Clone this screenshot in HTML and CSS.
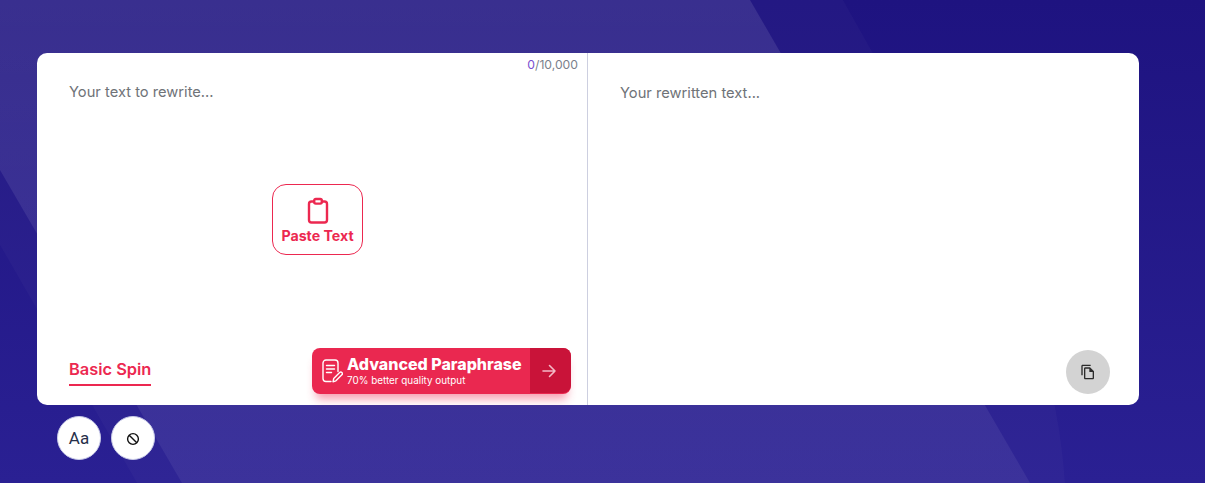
FILE: index.html
```html
<!DOCTYPE html>
<html lang="en">
<head>
<meta charset="utf-8">
<title>Paraphrase</title>
<link rel="stylesheet" href="styles.css">
</head>
<body>
<svg class="bg-shapes" width="1205" height="483" viewBox="0 0 1205 483" aria-hidden="true">
  <defs>
    <linearGradient id="nearFill" x1="0" y1="0" x2="0" y2="1">
      <stop class="near-top" offset="0"/>
      <stop class="near-bottom" offset="1"/>
    </linearGradient>
  </defs>
  <path class="band-far" d="M0 0H843L1040 350Q1060 410 1065 483H137L0 245Z"/>
  <path class="band-near" d="M0 0H750L1030 483H182L0 170Z"/>
</svg>
<main class="page">
  <section class="card">
    <div class="panel panel-left">
      <div class="count"><span class="count-now">0</span>/10,000</div>
      <p class="placeholder">Your text to rewrite...</p>
      <div class="paste-area">
        <button class="paste" type="button">
          <svg class="paste-icon" width="24" height="28" viewBox="0 0 24 28" fill="none" stroke="currentColor" stroke-width="2.4" stroke-linejoin="round">
            <rect x="3" y="4.5" width="18" height="21" rx="2.5"/>
            <rect x="8.2" y="2" width="7.6" height="4.6" rx="1.6" fill="#fff"/>
          </svg>
          <span>Paste Text</span>
        </button>
      </div>
      <div class="actions">
        <a class="basic-spin">Basic Spin</a>
        <button class="advanced" type="button">
          <span class="advanced-main">
            <svg width="21" height="24" viewBox="0 0 21 24" fill="none" stroke="#fff" stroke-width="1.4" stroke-linecap="round" stroke-linejoin="round">
              <path d="M9 22.5H4a3 3 0 0 1-3-3V4a3 3 0 0 1 3-3h9a3 3 0 0 1 3 3v8.5"/>
              <path d="M4.5 6.5h8M4.5 10h8M4.5 13.5h5"/>
              <path d="M11 22.8l.7-3.2 6-6a1.5 1.5 0 0 1 2.2 2.2l-6 6z"/>
            </svg>
            <span class="advanced-text">
              <strong>Advanced Paraphrase</strong>
              <small>70% better quality output</small>
            </span>
          </span>
          <span class="advanced-go">
            <svg width="16" height="16" viewBox="0 0 16 16" fill="none" stroke="#f3b9c6" stroke-width="1.6" stroke-linecap="round" stroke-linejoin="round">
              <path d="M2 8h12M8.5 2.5L14 8l-5.5 5.5"/>
            </svg>
          </span>
        </button>
      </div>
    </div>
    <div class="panel panel-right">
      <p class="placeholder">Your rewritten text...</p>
      <button class="copy" type="button" aria-label="Copy">
        <svg width="16" height="16" viewBox="0 0 24 24" fill="#2b2b2b">
          <path d="M16 1H4c-1.1 0-2 .9-2 2v14h2V3h12V1zm-1 4H8c-1.1 0-1.99.9-1.99 2L6 21c0 1.1.89 2 1.99 2H19c1.1 0 2-.9 2-2V11l-6-6zM8 21V7h6v5h5v9H8z"/>
        </svg>
      </button>
    </div>
  </section>
  <div class="tools">
    <button class="tool tool-text" type="button">Aa</button>
    <button class="tool" type="button" aria-label="Clear">
      <svg width="14" height="14" viewBox="0 0 14 14" fill="none" stroke="#111" stroke-width="1.4">
        <circle cx="7" cy="7" r="5.4"/>
        <path d="M3.2 3.2l7.6 7.6"/>
      </svg>
    </button>
  </div>
</main>
</body>
</html>
```
FILE: styles.css
```css
* { box-sizing: border-box; }
html, body { height: 100%; }
body {
  margin: 0;
  overflow: hidden;
  position: relative;
  background: linear-gradient(180deg, #1e1380 0%, #2a2093 100%);
  font-family: "Inter", "Liberation Sans", sans-serif;
}
.bg-shapes { position: absolute; left: 0; top: 0; }
.band-far { fill: rgba(255, 255, 255, 0.022); }
.band-near { fill: url(#nearFill); }
.near-top { stop-color: #ffffff; stop-opacity: 0.1; }
.near-bottom { stop-color: #ffffff; stop-opacity: 0.06; }
.page {
  position: relative;
  padding: 53px 66px 0 37px;
}
.card {
  display: flex;
  height: 352px;
  background: #fff;
  border-radius: 10px;
}
.panel {
  display: flex;
  flex-direction: column;
  flex: 0 0 551px;
}
.panel-left {
  padding: 5px 0 11px 32px;
  border-right: 1px solid #cdcfe0;
}
.panel-right {
  padding: 31px 29px 11px 32px;
}
.count {
  align-self: flex-end;
  margin-right: 9px;
  font-size: 12.2px;
  line-height: 14px;
  color: #7b7f8c;
}
.count-now { color: #7a4fd0; }
.placeholder {
  margin: 0;
  font-size: 14.7px;
  line-height: 18px;
  color: #6f7378;
}
.panel-left .placeholder { margin-top: 11px; }
.paste-area {
  flex: 1 1 auto;
  padding: 83px 0 0 203px;
}
.paste {
  display: flex;
  flex-direction: column;
  align-items: center;
  width: 91px;
  height: 71px;
  padding: 12px 0 0;
  background: #fff;
  border: 1px solid #ec2850;
  border-radius: 14px;
  color: #ec2850;
  font: 700 14.2px/16px "Inter", "Liberation Sans", sans-serif;
  white-space: nowrap;
}
.paste-icon { margin-bottom: 3px; }
.actions {
  display: flex;
  justify-content: space-between;
  align-items: flex-end;
  padding-right: 16px;
}
.basic-spin {
  margin-bottom: 8px;
  padding-bottom: 6px;
  border-bottom: 2px solid #ec2850;
  color: #ec2850;
  font-size: 16.4px;
  font-weight: 600;
  line-height: 18px;
}
.advanced {
  display: flex;
  width: 259px;
  height: 46px;
  padding: 0;
  border: 0;
  border-radius: 8px;
  background: #ea2850;
  box-shadow: 0 9px 10px -4px rgba(236, 40, 80, 0.45);
  color: #fff;
  font-family: inherit;
  text-align: left;
}
.advanced-main {
  display: flex;
  flex: 1 1 auto;
  align-items: center;
  gap: 4px;
  padding-left: 10px;
}
.advanced-text {
  display: flex;
  flex-direction: column;
  margin-top: -1px;
}
.advanced-text strong {
  font-size: 16px;
  font-weight: 800;
  line-height: 19px;
  white-space: nowrap;
}
.advanced-text small {
  font-size: 9.9px;
  line-height: 13px;
  white-space: nowrap;
}
.advanced-go {
  display: flex;
  flex: 0 0 41px;
  align-items: center;
  justify-content: center;
  height: 45px;
  padding-right: 4px;
  background: #c91339;
  border-radius: 0 8px 8px 0;
}
.copy {
  display: flex;
  align-items: center;
  justify-content: center;
  align-self: flex-end;
  width: 44px;
  height: 44px;
  margin-top: auto;
  padding: 0;
  border: 0;
  border-radius: 50%;
  background: #d3d3d3;
}
.tools {
  display: flex;
  gap: 10px;
  margin: 11px 0 0 20px;
}
.tool {
  display: flex;
  align-items: center;
  justify-content: center;
  width: 44px;
  height: 44px;
  padding: 1px 0 0;
  border: 1px solid #c9cbe8;
  border-radius: 50%;
  background: #fff;
}
.tool-text {
  color: #262f4a;
  font: 400 17px/1 "Roboto", "Liberation Sans", sans-serif;
}
```
